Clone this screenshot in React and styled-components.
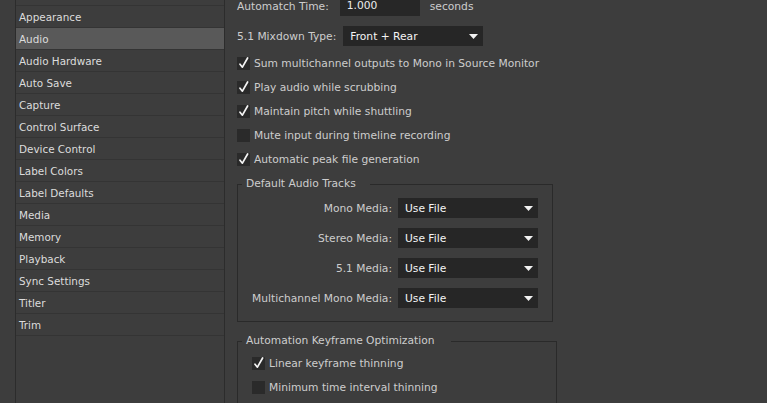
import React from "react";
import styled, { createGlobalStyle } from "styled-components";

const Global = createGlobalStyle`
  html, body { margin: 0; padding: 0; }
  body {
    background: #3d3d3d;
    font-family: "DejaVu Sans", "Liberation Sans", sans-serif;
    font-size: 10.7px;
    color: #d4d4d4;
    overflow: hidden;
  }
`;

const Page = styled.div`
  display: flex;
  align-items: flex-start;
  height: 403px;
  overflow: hidden;
  background: #3d3d3d;
`;

const Sidebar = styled.ul`
  list-style: none;
  margin: 0 0 0 15px;
  padding: 0;
  width: 208px;
  height: 420px;
  border-left: 1px solid #2c2c2c;
  border-right: 1px solid #2c2c2c;
  flex: none;
  font-size: 10.4px;
`;

const Item = styled.li`
  height: ${(p) => (p.$spacer ? 5 : 21)}px;
  line-height: 23px;
  overflow: hidden;
  padding-left: 3px;
  border-bottom: 1px solid #343434;
  background: ${(p) => (p.$active ? "#595959" : "transparent")};
  color: #dcdcdc;
  white-space: nowrap;
`;

const Panel = styled.div`
  display: flex;
  flex-direction: column;
  padding-left: 12px;
  margin-top: -4px;
  flex: none;
  & > * { flex-shrink: 0; }
`;

const Line = styled.div`
  display: flex;
  align-items: center;
  height: 20px;
  margin-top: ${(p) => p.$mt || 0}px;
`;

const Label = styled.span`
  color: #cdcdcd;
  white-space: nowrap;
`;

const TextInput = styled.div`
  width: 73px;
  height: 20px;
  line-height: 20px;
  padding-left: 7px;
  margin-left: ${(p) => p.$ml}px;
  background: #272727;
  color: #ececec;
`;

const Unit = styled.span`
  margin-left: 10px;
  color: #cdcdcd;
`;

const Select = styled.div`
  display: flex;
  align-items: center;
  justify-content: space-between;
  box-sizing: border-box;
  width: 140px;
  height: 20px;
  padding: 0 5px 0 7px;
  margin-left: ${(p) => p.$ml || 0}px;
  background: #262626;
  color: #f4f4f4;
  font-weight: 500;
`;

const Arrow = styled.svg`
  width: 9px;
  height: 5px;
  display: block;
`;

const CheckRow = styled.label`
  display: flex;
  align-items: center;
  height: 24px;
  padding-left: ${(p) => p.$pl || 0}px;
  color: #cdcdcd;
  white-space: nowrap;
`;

const Box = styled.span`
  width: 13px;
  height: 13px;
  background: #2a2a2a;
  margin-right: 4px;
  display: flex;
  align-items: center;
  justify-content: center;
  flex: none;
`;

const Spacer = styled.div`
  height: 5px;
`;

const Group = styled.fieldset`
  margin: ${(p) => p.$mt}px 0 0 0;
  padding: ${(p) => p.$pad};
  width: ${(p) => p.$w}px;
  box-sizing: border-box;
  border: 1px solid #2a2a2a;
  min-width: 0;
`;

const Legend = styled.legend`
  margin-left: 4px;
  padding: 0 ${(p) => p.$pr}px 0 4px;
  line-height: 14px;
  color: #cdcdcd;
  white-space: nowrap;
`;

const Grid = styled.div`
  display: grid;
  grid-template-columns: 154px 140px;
  column-gap: 6px;
  row-gap: 10px;
  align-items: center;
`;

const GridLabel = styled.span`
  text-align: right;
  color: #cdcdcd;
  white-space: nowrap;
`;

const Caret = () => (
  <Arrow viewBox="0 0 9 5">
    <path d="M0 0 H9 L4.5 5 Z" fill="#f2f2f2" />
  </Arrow>
);

const Check = ({ on }) => (
  <Box>
    {on && (
      <svg width="11" height="12" viewBox="0 0 11 12">
        <path d="M2 7.2 L4.4 10.2 L9.6 1" fill="none" stroke="#f4f4f4" strokeWidth="1.7" strokeLinecap="round" strokeLinejoin="round" />
      </svg>
    )}
  </Box>
);

const items = [
  "Appearance", "Audio", "Audio Hardware", "Auto Save", "Capture",
  "Control Surface", "Device Control", "Label Colors", "Label Defaults", "Media",
  "Memory", "Playback", "Sync Settings", "Titler", "Trim",
];

const checks = [
  ["Sum multichannel outputs to Mono in Source Monitor", true],
  ["Play audio while scrubbing", true],
  ["Maintain pitch while shuttling", true],
  ["Mute input during timeline recording", false],
  ["Automatic peak file generation", true],
];

const tracks = ["Mono Media:", "Stereo Media:", "5.1 Media:", "Multichannel Mono Media:"];

export default function App() {
  return (
    <>
      <Global />
      <Page>
        <Sidebar>
          <Item $spacer />
          {items.map((t) => (
            <Item key={t} $active={t === "Audio"}>{t}</Item>
          ))}
        </Sidebar>
        <Panel>
          <Line>
            <Label>Automatch Time:</Label>
            <TextInput $ml={11}>1.000</TextInput>
            <Unit>seconds</Unit>
          </Line>
          <Line $mt={10}>
            <Label>5.1 Mixdown Type:</Label>
            <Select $ml={7}>
              <span>Front + Rear</span>
              <Caret />
            </Select>
          </Line>
          <Spacer />
          {checks.map(([t, on]) => (
            <CheckRow key={t}>
              <Check on={on} />
              {t}
            </CheckRow>
          ))}
          <Group $mt={6} $w={316} $pad="7px 0 13px 0">
            <Legend $pr={14}>Default Audio Tracks</Legend>
            <Grid>
              {tracks.map((t) => (
                <React.Fragment key={t}>
                  <GridLabel>{t}</GridLabel>
                  <Select>
                    <span>Use File</span>
                    <Caret />
                  </Select>
                </React.Fragment>
              ))}
            </Grid>
          </Group>
          <Group $mt={12} $w={320} $pad="3px 0 14px 0">
            <Legend $pr={17}>Automation Keyframe Optimization</Legend>
            <CheckRow $pl={14}>
              <Check on />
              Linear keyframe thinning
            </CheckRow>
            <CheckRow $pl={14}>
              <Check on={false} />
              Minimum time interval thinning
            </CheckRow>
          </Group>
        </Panel>
      </Page>
    </>
  );
}
